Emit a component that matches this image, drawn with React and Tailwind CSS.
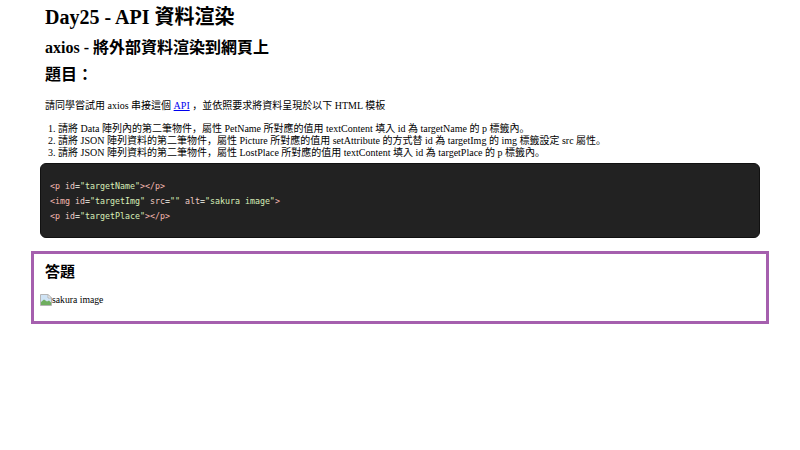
const serif = "font-['Liberation_Serif','Noto_Sans_CJK_JP',serif]";

const CodeLine = ({ children }) => <div className="h-[15px] leading-[15px] whitespace-pre">{children}</div>;

const Tag = ({ children }) => <span className="text-[#f4b8b0]">{children}</span>;
const Attr = ({ children }) => <span className="text-[#eeccc4]">{children}</span>;
const Punct = ({ children }) => <span className="text-[#f5f5f0]">{children}</span>;
const Str = ({ children }) => <span className="text-[#d8eeb8]">{children}</span>;

export default function App() {
  return (
    <div className={`${serif} min-h-[450px] bg-white text-black text-base`}>
      <div className="px-10">
        <div className="px-[5px]">
          <h1 className="text-[20px] font-bold leading-[23px] pt-[6px]">Day25 - API 資料渲染</h1>
          <h2 className="text-[16px] font-bold leading-[18px] mt-[10px]">axios - 將外部資料渲染到網頁上</h2>
          <h2 className="text-[16px] font-bold leading-[18px] mt-[9px]">題目：</h2>
          <p className="text-[10px] leading-[12px] mt-[16px]">
            請同學嘗試用 axios 串接這個 <a href="#" className="text-[#0000ee] underline">API</a> ，並依照要求將資料呈現於以下 HTML 模板
          </p>
          <ol className="list-decimal pl-[13px] text-[10px] leading-[12px] mt-[11px]">
            <li>請將 Data 陣列內的第二筆物件，屬性 PetName 所對應的值用 textContent 填入 id 為 targetName 的 p 標籤內。</li>
            <li>請將 JSON 陣列資料的第二筆物件，屬性 Picture 所對應的值用 setAttribute 的方式替 id 為 targetImg 的 img 標籤設定 src 屬性。</li>
            <li>請將 JSON 陣列資料的第二筆物件，屬性 LostPlace 所對應的值用 textContent 填入 id 為 targetPlace 的 p 標籤內。</li>
          </ol>
        </div>
        <div className="mt-[4px] h-[75px] rounded-[6px] border border-[#111111] bg-[#222222] px-[9px] py-[15px] font-['DejaVu_Sans_Mono',monospace] text-[8.3px]">
          <CodeLine><Tag>&lt;p </Tag><Attr>id</Attr><Punct>=</Punct><Str>"targetName"</Str><Tag>&gt;&lt;/p&gt;</Tag></CodeLine>
          <CodeLine><Tag>&lt;img </Tag><Attr>id</Attr><Punct>=</Punct><Str>"targetImg"</Str> <Attr>src</Attr><Punct>=</Punct><Str>""</Str> <Attr>alt</Attr><Punct>=</Punct><Str>"sakura image"</Str><Tag>&gt;</Tag></CodeLine>
          <CodeLine><Tag>&lt;p </Tag><Attr>id</Attr><Punct>=</Punct><Str>"targetPlace"</Str><Tag>&gt;&lt;/p&gt;</Tag></CodeLine>
        </div>
      </div>
      <div className="mx-[31px] mt-[13px] h-[73px] border-[3px] border-[#a55fae] px-[6px]">
        <h2 className="text-[15px] font-bold leading-[18px] mt-[9px] px-[5px]">答題</h2>
        <div className="text-[9.7px] leading-[12px] mt-[13px] flex items-center">
          {/* broken image icon */}
          <svg width="12" height="12" viewBox="0 0 12 12" className="shrink-0">
            <path d="M0.5 0.5h7.5l3.5 3.5v7.5h-11z" fill="#cfe3f5" stroke="#b5b5b5" />
            <path d="M1 11V8l3-2.5 3 2 2-1 2 2V11z" fill="#6fae5f" />
            <path d="M8 0.5v3.5h3.5z" fill="#fff" stroke="#b5b5b5" />
          </svg>
          <span>sakura image</span>
        </div>
      </div>
    </div>
  );
}
